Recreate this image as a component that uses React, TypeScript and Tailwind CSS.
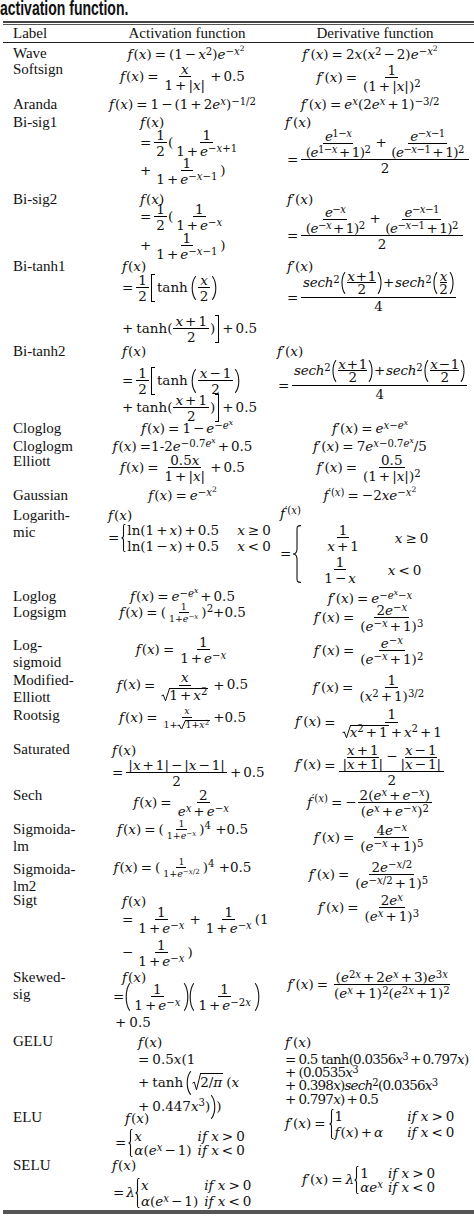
import React, { type ReactNode } from "react";

const x = <i>x</i>;
const e = <i>e</i>;
const fx = (
  <>
    <i className="mr-[1px]">f</i>(<i>x</i>)
  </>
);
const fpx = (
  <>
    <i>f</i>′(<i>x</i>)
  </>
);
const fpxs = (
  <>
    <i>f</i>
    <sup>
      ′(<i>x</i>)
    </sup>
  </>
);
const EQ = <span className="mx-[3px]">=</span>;
const P = <span className="mx-[2px]">+</span>;
const P1 = <span className="mx-[1px]">+</span>;
const Mi = <span className="mx-[2px]">−</span>;
const M1 = <span className="mx-[1px]">−</span>;
const GE = <span className="mx-[3px]">≥</span>;
const LT = <span className="mx-[3px]">&lt;</span>;
const GT = <span className="mx-[3px]">&gt;</span>;
const sech2 = (
  <>
    <i>sech</i>
    <sup>2</sup>
  </>
);

function Ln({ c, children }: { c: string; children: ReactNode }) {
  return (
    <div className={"flex h-0 items-center " + c}>
      <span className="whitespace-nowrap leading-[1.2]">{children}</span>
    </div>
  );
}

function Frac({
  n,
  d,
  s,
  t,
  dc = "",
}: {
  n: ReactNode;
  d: ReactNode;
  s?: boolean;
  t?: boolean;
  dc?: string;
}) {
  const nc = t ? "leading-[0.85] px-0" : "leading-[0.9] pb-[1px] px-[2px]";
  const dd = t ? "leading-[0.85] pt-[1px] px-0" : "leading-[0.9] pt-[2px] px-[2px]";
  return (
    <span
      className={
        "inline-flex flex-col items-center align-middle " +
        (s ? "text-[0.7em] mx-[1px]" : "mx-[1px]")
      }
    >
      <span className={"border-b border-black whitespace-nowrap " + nc}>{n}</span>
      <span className={"whitespace-nowrap " + dd + " " + dc}>{d}</span>
    </span>
  );
}

function Brace({ c }: { c: string }) {
  return (
    <svg viewBox="0 0 10 100" preserveAspectRatio="none" className={"inline-block shrink-0 " + c}>
      <path
        d="M9 1 C5 1 5 3 5 9 L5 41 C5 47 4 50 1 50 C4 50 5 53 5 59 L5 91 C5 97 5 99 9 99"
        fill="none"
        stroke="#111"
        strokeWidth="1.1"
        vectorEffect="non-scaling-stroke"
      />
    </svg>
  );
}

function BP({ r, c }: { r?: boolean; c: string }) {
  return (
    <svg viewBox="0 0 10 100" preserveAspectRatio="none" className={"inline-block align-middle " + c}>
      <path
        d={r ? "M2 1 C10 25 10 75 2 99" : "M8 1 C0 25 0 75 8 99"}
        fill="none"
        stroke="#111"
        strokeWidth="1.1"
        vectorEffect="non-scaling-stroke"
      />
    </svg>
  );
}

function Br({ r, c }: { r?: boolean; c: string }) {
  return (
    <span
      className={
        "inline-block align-middle w-[4px] border-y border-black " +
        (r ? "border-r mr-[1px] " : "border-l ml-[1px] ") +
        c
      }
    />
  );
}

function Sq({ children }: { children: ReactNode }) {
  return (
    <span className="relative inline-block pl-[8px]">
      <svg viewBox="0 0 10 20" preserveAspectRatio="none" className="absolute left-0 top-0 h-full w-[9px]">
        <path
          d="M0.5 12 L2.5 10.5 L5 19.5 L9.5 0.5 L10 0.5"
          fill="none"
          stroke="#111"
          strokeWidth="1"
          vectorEffect="non-scaling-stroke"
        />
      </svg>
      <span className="inline-block border-t border-black pr-[1px]">{children}</span>
    </span>
  );
}

function Row({ h, label, a, d }: { h: string; label: ReactNode; a: ReactNode; d: ReactNode }) {
  return (
    <div className={"grid grid-cols-[102px_155px_1fr] " + h}>
      <div className="pl-[10px] font-['Liberation_Serif',serif] text-[15px] leading-[17px]">{label}</div>
      <div className="flex flex-col">{a}</div>
      <div className="flex flex-col pl-[6px]">{d}</div>
    </div>
  );
}

const denE = (sup: ReactNode) => (
  <>
    1{P}
    {e}
    <sup>{sup}</sup>
  </>
);

function Cases2({
  brace,
  grid,
  cells,
}: {
  brace: string;
  grid: string;
  cells: ReactNode[];
}) {
  return (
    <span className="inline-flex items-center align-middle">
      <Brace c={brace} />
      <span className={"ml-[1px] inline-grid grid-cols-[auto_auto] " + grid}>
        {cells.map((c, k) => (
          <span key={k}>{c}</span>
        ))}
      </span>
    </span>
  );
}

const ifGt = (
  <>
    <i>if</i> {x}
    {GT}0
  </>
);
const ifLt = (
  <>
    <i>if</i> {x}
    {LT}0
  </>
);
const alphaE = (
  <>
    <i>α</i>({e}
    <sup>{x}</sup>
    {Mi}1)
  </>
);

export default function App() {
  return (
    <div className="w-[474px] h-[1217px] overflow-hidden bg-white text-[#111]">
      <div className="h-[23px]">
        <div className="-mt-[2px] origin-left scale-x-[0.7] whitespace-nowrap font-['Liberation_Sans',sans-serif] text-[20px] font-bold leading-[20px]">
          activation function.
        </div>
      </div>
      <div className="pl-[3px] font-['DejaVu_Serif',serif] text-[13.5px] [&_sup]:top-[-0.42em]">
        <div className="h-[2px] bg-[#444]" />
        <div className="h-[1px]" />
        <div className="h-[1px] bg-[#555]" />
        <div className="grid grid-cols-[102px_155px_1fr] h-[17px] font-['Liberation_Serif',serif] text-[15px] leading-[17px]">
          <div className="pl-[10px]">Label</div>
          <div className="pl-[9px] text-center">Activation function</div>
          <div className="pl-[16px] text-center">Derivative function</div>
        </div>
        <div className="h-[1px] bg-[#222]" />
        <div className="h-[1.5px]" />

        <Row
          h="h-[16px]"
          label="Wave"
          a={
            <Ln c="mt-[9.5px] justify-center pl-[7px]">
              {fx}
              {EQ}(1{Mi}
              {x}
              <sup>2</sup>){e}
              <sup>
                −{x}
                <sup>2</sup>
              </sup>
            </Ln>
          }
          d={
            <Ln c="mt-[9.5px] justify-center">
              {fpx}
              {EQ}2{x}({x}
              <sup>2</sup>
              {Mi}2){e}
              <sup>
                −{x}
                <sup>2</sup>
              </sup>
            </Ln>
          }
        />
        <Row
          h="h-[35px]"
          label="Softsign"
          a={
            <Ln c="mt-[16.5px] justify-center">
              {fx}
              {EQ}
              <Frac n={x} d={<>1{P}|{x}|</>} />
              {P}0.5
            </Ln>
          }
          d={
            <Ln c="mt-[17.5px] justify-center">
              {fpx}
              {EQ}
              <Frac
                n="1"
                d={
                  <>
                    (1{P}|{x}|)<sup>2</sup>
                  </>
                }
              />
            </Ln>
          }
        />
        <Row
          h="h-[18px]"
          label="Aranda"
          a={
            <Ln c="mt-[8.5px] justify-center">
              {fx}
              {EQ}1{Mi}(1{P}2{e}
              <sup>{x}</sup>)<sup>−1/2</sup>
            </Ln>
          }
          d={
            <Ln c="mt-[8.5px] justify-center">
              {fpx}
              {EQ}
              {e}
              <sup>{x}</sup>(2{e}
              <sup>{x}</sup>
              {P}1)<sup>−3/2</sup>
            </Ln>
          }
        />
        <Row
          h="h-[77px]"
          label="Bi-sig1"
          a={
            <>
              <Ln c="mt-[8.5px] pl-[35px]">{fx}</Ln>
              <Ln c="mt-[21px] pl-[35px]">
                <span className="mr-[2px]">=</span>
                <Frac n="1" d="2" />(
                <Frac n="1" d={denE(<>−{x}+1</>)} />
              </Ln>
              <Ln c="mt-[28px] pl-[35px]">
                <span className="mr-[2px]">+</span>
                <Frac n="1" d={denE(<>−{x}−1</>)} />)
              </Ln>
            </>
          }
          d={
            <>
              <Ln c="mt-[8.5px] pl-[19px]">{fpx}</Ln>
              <Ln c="mt-[38px] pl-[21px] tracking-[-0.04em]">
                <span className="mr-[2px]">=</span>
                <Frac
                  dc="pb-[16px]"
                  n={
                    <>
                      <Frac
                        n={
                          <>
                            {e}
                            <sup>1−{x}</sup>
                          </>
                        }
                        d={
                          <>
                            ({e}
                            <sup>1−{x}</sup>
                            {P}1)<sup>2</sup>
                          </>
                        }
                      />
                      {P}
                      <Frac
                        n={
                          <>
                            {e}
                            <sup>−{x}−1</sup>
                          </>
                        }
                        d={
                          <>
                            ({e}
                            <sup>−{x}−1</sup>
                            {P}1)<sup>2</sup>
                          </>
                        }
                      />
                    </>
                  }
                  d="2"
                />
              </Ln>
            </>
          }
        />
        <Row
          h="h-[67px]"
          label="Bi-sig2"
          a={
            <>
              <Ln c="mt-[8.5px] pl-[35px]">{fx}</Ln>
              <Ln c="mt-[18px] pl-[35px]">
                <span className="mr-[2px]">=</span>
                <Frac n="1" d="2" />(
                <Frac n="1" d={denE(<>−{x}</>)} />
              </Ln>
              <Ln c="mt-[29px] pl-[35px]">
                <span className="mr-[2px]">+</span>
                <Frac n="1" d={denE(<>−{x}−1</>)} />)
              </Ln>
            </>
          }
          d={
            <>
              <Ln c="mt-[8.5px] pl-[21px]">{fpx}</Ln>
              <Ln c="mt-[37px] pl-[21px] tracking-[-0.04em]">
                <span className="mr-[2px]">=</span>
                <Frac
                  dc="pb-[16px]"
                  n={
                    <>
                      <Frac
                        n={
                          <>
                            {e}
                            <sup>−{x}</sup>
                          </>
                        }
                        d={
                          <>
                            ({e}
                            <sup>−{x}</sup>
                            {P}1)<sup>2</sup>
                          </>
                        }
                      />
                      {P}
                      <Frac
                        n={
                          <>
                            {e}
                            <sup>−{x}−1</sup>
                          </>
                        }
                        d={
                          <>
                            ({e}
                            <sup>−{x}−1</sup>
                            {P}1)<sup>2</sup>
                          </>
                        }
                      />
                    </>
                  }
                  d="2"
                />
              </Ln>
            </>
          }
        />
        <Row
          h="h-[85px]"
          label="Bi-tanh1"
          a={
            <>
              <Ln c="mt-[8.5px] pl-[17px]">{fx}</Ln>
              <Ln c="mt-[22px] pl-[17px]">
                <span className="mr-[2px]">=</span>
                <Frac n="1" d="2" />
                <Br c="h-[28px]" />
                <span className="ml-[2px] mr-[3px]">tanh</span>
                <BP c="w-[6px] h-[24px]" />
                <Frac n={x} d="2" />
                <BP r c="w-[6px] h-[24px]" />
              </Ln>
              <Ln c="mt-[41px] pl-[17px]">
                <span className="mr-[3px]">+</span>tanh(
                <Frac n={<>{x}{P}1</>} d="2" />)
                <Br r c="h-[28px]" />
                {P}0.5
              </Ln>
            </>
          }
          d={
            <>
              <Ln c="mt-[8.5px] pl-[21px]">{fpx}</Ln>
              <Ln c="mt-[32px] pl-[21px] tracking-[-0.02em]">
                <span className="mr-[2px]">=</span>
                <Frac
                  dc="pb-[13px]"
                  n={
                    <>
                      {sech2}
                      <BP c="ml-[2px] w-[5px] h-[22px]" />
                      <Frac t n={<>{x}{P1}1</>} d="2" />
                      <BP r c="w-[5px] h-[22px]" />
                      {P1}
                      {sech2}
                      <BP c="ml-[2px] w-[5px] h-[22px]" />
                      <Frac t n={x} d="2" />
                      <BP r c="w-[5px] h-[22px]" />
                    </>
                  }
                  d="4"
                />
              </Ln>
            </>
          }
        />
        <Row
          h="h-[77px]"
          label="Bi-tanh2"
          a={
            <>
              <Ln c="mt-[8.5px] pl-[17px]">{fx}</Ln>
              <Ln c="mt-[30px] pl-[17px]">
                <span className="mr-[2px]">=</span>
                <Frac n="1" d="2" />
                <Br c="h-[28px]" />
                <span className="ml-[2px] mr-[3px]">tanh</span>
                <BP c="w-[6px] h-[24px]" />
                <Frac n={<>{x}{Mi}1</>} d="2" />
                <BP r c="w-[6px] h-[24px]" />
              </Ln>
              <Ln c="mt-[27px] pl-[17px]">
                <span className="mr-[3px]">+</span>tanh(
                <Frac n={<>{x}{P}1</>} d="2" />)
                <Br r c="h-[28px]" />
                {P}0.5
              </Ln>
            </>
          }
          d={
            <>
              <Ln c="mt-[8.5px] pl-[11px]">{fpx}</Ln>
              <Ln c="mt-[35px] pl-[12px] tracking-[-0.02em]">
                <span className="mr-[2px]">=</span>
                <Frac
                  dc="pb-[13px]"
                  n={
                    <>
                      {sech2}
                      <BP c="ml-[2px] w-[5px] h-[22px]" />
                      <Frac t n={<>{x}{P1}1</>} d="2" />
                      <BP r c="w-[5px] h-[22px]" />
                      {P1}
                      {sech2}
                      <BP c="ml-[2px] w-[5px] h-[22px]" />
                      <Frac t n={<>{x}{M1}1</>} d="2" />
                      <BP r c="w-[5px] h-[22px]" />
                    </>
                  }
                  d="4"
                />
              </Ln>
            </>
          }
        />
        <Row
          h="h-[18px]"
          label="Cloglog"
          a={
            <Ln c="mt-[8.5px] justify-center pl-[9px]">
              {fx}
              {EQ}1{Mi}
              {e}
              <sup>
                −{e}
                <sup>{x}</sup>
              </sup>
            </Ln>
          }
          d={
            <Ln c="mt-[8.5px] justify-center">
              {fpx}
              {EQ}
              {e}
              <sup>
                {x}−{e}
                <sup>{x}</sup>
              </sup>
            </Ln>
          }
        />
        <Row
          h="h-[15px]"
          label="Cloglogm"
          a={
            <Ln c="mt-[8.5px] justify-center">
              {fx}
              <span className="ml-[3px]">=1-2</span>
              {e}
              <sup>
                −0.7{e}
                <sup>{x}</sup>
              </sup>
              {P}0.5
            </Ln>
          }
          d={
            <Ln c="mt-[8.5px] justify-center">
              {fpx}
              {EQ}7{e}
              <sup>
                {x}−0.7{e}
                <sup>{x}</sup>
              </sup>
              /5
            </Ln>
          }
        />
        <Row
          h="h-[34px]"
          label="Elliott"
          a={
            <Ln c="mt-[15.5px] justify-center">
              {fx}
              {EQ}
              <Frac n={<>0.5{x}</>} d={<>1{P}|{x}|</>} />
              {P}0.5
            </Ln>
          }
          d={
            <Ln c="mt-[15.5px] justify-center">
              {fpx}
              {EQ}
              <Frac
                n="0.5"
                d={
                  <>
                    (1{P}|{x}|)<sup>2</sup>
                  </>
                }
              />
            </Ln>
          }
        />
        <Row
          h="h-[20px]"
          label="Gaussian"
          a={
            <Ln c="mt-[8.5px] justify-center">
              {fx}
              {EQ}
              {e}
              <sup>
                −{x}
                <sup>2</sup>
              </sup>
            </Ln>
          }
          d={
            <Ln c="mt-[8.5px] justify-center">
              {fpxs}
              {EQ}−2{x}
              {e}
              <sup>
                −{x}
                <sup>2</sup>
              </sup>
            </Ln>
          }
        />
        <Row
          h="h-[81px]"
          label={
            <>
              Logarith-
              <br />
              mic
            </>
          }
          a={
            <>
              <Ln c="mt-[8.5px] pl-[3px]">{fx}</Ln>
              <Ln c="mt-[23px] pl-[3px]">
                <span className="mr-[2px]">=</span>
                <Cases2
                  brace="w-[5px] h-[28px]"
                  grid="gap-x-[18px] leading-[16px]"
                  cells={[
                    <>
                      ln(1{P}
                      {x}){P}0.5
                    </>,
                    <>
                      {x}
                      {GE}0
                    </>,
                    <>
                      ln(1{Mi}
                      {x}){P}0.5
                    </>,
                    <>
                      {x}
                      {LT}0
                    </>,
                  ]}
                />
              </Ln>
            </>
          }
          d={
            <>
              <Ln c="mt-[6.5px] pl-[14px]">{fpxs}</Ln>
              <Ln c="mt-[41px] pl-[14px]">
                <span className="mr-[1px]">=</span>
                <span className="inline-flex items-center align-middle">
                  <Brace c="w-[10px] h-[58px]" />
                  <span className="inline-flex flex-col gap-[3px]">
                    <span className="flex items-center">
                      <span className="ml-[22px]">
                        <Frac n="1" d={<>{x}{P}1</>} />
                      </span>
                      <span className="ml-[33px]">
                        {x}
                        {GE}0
                      </span>
                    </span>
                    <span className="flex items-center">
                      <span className="ml-[19px]">
                        <Frac n="1" d={<>1{Mi}{x}</>} />
                      </span>
                      <span className="ml-[29px]">
                        {x}
                        {LT}0
                      </span>
                    </span>
                  </span>
                </span>
              </Ln>
            </>
          }
        />
        <Row
          h="h-[16px]"
          label="Loglog"
          a={
            <Ln c="mt-[8.5px] justify-center">
              {fx}
              {EQ}
              {e}
              <sup>
                −{e}
                <sup>{x}</sup>
              </sup>
              {P}0.5
            </Ln>
          }
          d={
            <Ln c="mt-[10.5px] justify-center">
              {fpx}
              {EQ}
              {e}
              <sup>
                −{e}
                <sup>{x}</sup>−{x}
              </sup>
            </Ln>
          }
        />
        <Row
          h="h-[33px]"
          label="Logsigm"
          a={
            <Ln c="mt-[9.5px] justify-center">
              {fx}
              {EQ}(
              <Frac
                s
                n="1"
                d={
                  <>
                    1+{e}
                    <sup>−{x}</sup>
                  </>
                }
              />
              )<sup>2</sup>+0.5
            </Ln>
          }
          d={
            <Ln c="mt-[14.5px] justify-center">
              {fpx}
              {EQ}
              <Frac
                n={
                  <>
                    2{e}
                    <sup>−{x}</sup>
                  </>
                }
                d={
                  <>
                    ({e}
                    <sup>−{x}</sup>
                    {P}1)<sup>3</sup>
                  </>
                }
              />
            </Ln>
          }
        />
        <Row
          h="h-[35px]"
          label={
            <>
              Log-
              <br />
              sigmoid
            </>
          }
          a={
            <Ln c="mt-[13.5px] justify-center">
              {fx}
              {EQ}
              <Frac n="1" d={denE(<>−{x}</>)} />
            </Ln>
          }
          d={
            <Ln c="mt-[14.5px] justify-center">
              {fpx}
              {EQ}
              <Frac
                n={
                  <>
                    {e}
                    <sup>−{x}</sup>
                  </>
                }
                d={
                  <>
                    ({e}
                    <sup>−{x}</sup>
                    {P}1)<sup>2</sup>
                  </>
                }
              />
            </Ln>
          }
        />
        <Row
          h="h-[35px]"
          label={
            <>
              Modified-
              <br />
              Elliott
            </>
          }
          a={
            <Ln c="mt-[14.5px] justify-center">
              {fx}
              {EQ}
              <Frac
                n={x}
                d={
                  <Sq>
                    1{P}
                    {x}
                    <sup>2</sup>
                  </Sq>
                }
              />
              {P}0.5
            </Ln>
          }
          d={
            <Ln c="mt-[16.5px] justify-center">
              {fpx}
              {EQ}
              <Frac
                n="1"
                d={
                  <>
                    ({x}
                    <sup>2</sup>
                    {P}1)<sup>3/2</sup>
                  </>
                }
              />
            </Ln>
          }
        />
        <Row
          h="h-[34px]"
          label="Rootsig"
          a={
            <Ln c="mt-[11.5px] justify-center">
              {fx}
              {EQ}
              <Frac
                s
                n={x}
                d={
                  <>
                    1+
                    <Sq>
                      1+{x}
                      <sup>2</sup>
                    </Sq>
                  </>
                }
              />
              +0.5
            </Ln>
          }
          d={
            <Ln c="mt-[16.5px] justify-center">
              {fpx}
              {EQ}
              <Frac
                n="1"
                d={
                  <>
                    <Sq>
                      {x}
                      <sup>2</sup>
                      {P}1
                    </Sq>
                    {P}
                    {x}
                    <sup>2</sup>
                    {P}1
                  </>
                }
              />
            </Ln>
          }
        />
        <Row
          h="h-[46px]"
          label="Saturated"
          a={
            <>
              <Ln c="mt-[9.5px] pl-[7px]">{fx}</Ln>
              <Ln c="mt-[23px] pl-[7px]">
                <span className="mr-[2px]">=</span>
                <Frac
                  n={
                    <>
                      |{x}
                      {P}1|{Mi}|{x}
                      {Mi}1|
                    </>
                  }
                  d="2"
                />
                {P}0.5
              </Ln>
            </>
          }
          d={
            <Ln c="mt-[25.5px] justify-center">
              {fpx}
              {EQ}
              <Frac
                n={
                  <>
                    <Frac t n={<>{x}{P}1</>} d={<>|{x}{P}1|</>} />
                    {Mi}
                    <Frac t n={<>{x}{Mi}1</>} d={<>|{x}{Mi}1|</>} />
                  </>
                }
                d="2"
              />
            </Ln>
          }
        />
        <Row
          h="h-[34px]"
          label="Sech"
          a={
            <Ln c="mt-[16.5px] justify-center">
              {fx}
              {EQ}
              <Frac
                n="2"
                d={
                  <>
                    {e}
                    <sup>{x}</sup>
                    {P}
                    {e}
                    <sup>−{x}</sup>
                  </>
                }
              />
            </Ln>
          }
          d={
            <Ln c="mt-[16.5px] justify-center">
              {fpxs}
              {EQ}−
              <Frac
                n={
                  <>
                    2({e}
                    <sup>{x}</sup>
                    {P}
                    {e}
                    <sup>−{x}</sup>)
                  </>
                }
                d={
                  <>
                    ({e}
                    <sup>{x}</sup>
                    {P}
                    {e}
                    <sup>−{x}</sup>)<sup>2</sup>
                  </>
                }
              />
            </Ln>
          }
        />
        <Row
          h="h-[40px]"
          label={
            <>
              Sigmoida-
              <br />
              lm
            </>
          }
          a={
            <Ln c="mt-[9.5px] justify-center">
              {fx}
              {EQ}(
              <Frac
                s
                n="1"
                d={
                  <>
                    1+{e}
                    <sup>−{x}</sup>
                  </>
                }
              />
              )<sup>4</sup> +0.5
            </Ln>
          }
          d={
            <Ln c="mt-[17.5px] justify-center">
              {fpx}
              {EQ}
              <Frac
                n={
                  <>
                    4{e}
                    <sup>−{x}</sup>
                  </>
                }
                d={
                  <>
                    ({e}
                    <sup>−{x}</sup>
                    {P}1)<sup>5</sup>
                  </>
                }
              />
            </Ln>
          }
        />
        <Row
          h="h-[31px]"
          label={
            <>
              Sigmoida-
              <br />
              lm2
            </>
          }
          a={
            <Ln c="mt-[7.5px] justify-center">
              {fx}
              {EQ}(
              <Frac
                s
                n="1"
                d={
                  <>
                    1+{e}
                    <sup>−{x}/2</sup>
                  </>
                }
              />
              )<sup>4</sup> +0.5
            </Ln>
          }
          d={
            <Ln c="mt-[14.5px] justify-center">
              {fpx}
              {EQ}
              <Frac
                n={
                  <>
                    2{e}
                    <sup>−{x}/2</sup>
                  </>
                }
                d={
                  <>
                    ({e}
                    <sup>−{x}/2</sup>
                    {P}1)<sup>5</sup>
                  </>
                }
              />
            </Ln>
          }
        />
        <Row
          h="h-[77px]"
          label="Sigt"
          a={
            <>
              <Ln c="mt-[9.5px] pl-[17px]">{fx}</Ln>
              <Ln c="mt-[19px] pl-[17px]">
                <span className="mr-[2px]">=</span>
                <Frac n="1" d={denE(<>−{x}</>)} />
                {P}
                <Frac n="1" d={denE(<>−{x}</>)} />
                (1
              </Ln>
              <Ln c="mt-[33px] pl-[17px]">
                <span className="mr-[2px]">−</span>
                <Frac n="1" d={denE(<>−{x}</>)} />)
              </Ln>
            </>
          }
          d={
            <Ln c="mt-[16.5px] justify-center">
              {fpx}
              {EQ}
              <Frac
                n={
                  <>
                    2{e}
                    <sup>{x}</sup>
                  </>
                }
                d={
                  <>
                    ({e}
                    <sup>{x}</sup>
                    {P}1)<sup>3</sup>
                  </>
                }
              />
            </Ln>
          }
        />
        <Row
          h="h-[64px]"
          label={
            <>
              Skewed-
              <br />
              sig
            </>
          }
          a={
            <>
              <Ln c="mt-[8.5px] pl-[17px]">{fx}</Ln>
              <Ln c="mt-[20px] pl-[8px]">
                <span className="mr-[1px]">=</span>
                <BP c="w-[6px] h-[28px]" />
                <Frac n="1" d={denE(<>−{x}</>)} />
                <BP r c="w-[6px] h-[28px]" />
                <BP c="w-[6px] h-[28px]" />
                <Frac n="1" d={denE(<>−2{x}</>)} />
                <BP r c="w-[6px] h-[28px]" />
              </Ln>
              <Ln c="mt-[25px] pl-[10px]">
                <span className="mr-[3px]">+</span>0.5
              </Ln>
            </>
          }
          d={
            <Ln c="mt-[16.5px] justify-center">
              {fpx}
              {EQ}
              <Frac
                n={
                  <>
                    ({e}
                    <sup>2{x}</sup>
                    {P}2{e}
                    <sup>{x}</sup>
                    {P}3){e}
                    <sup>3{x}</sup>
                  </>
                }
                d={
                  <>
                    ({e}
                    <sup>{x}</sup>
                    {P}1)<sup>2</sup>({e}
                    <sup>2{x}</sup>
                    {P}1)<sup>2</sup>
                  </>
                }
              />
            </Ln>
          }
        />
        <Row
          h="h-[76px]"
          label="GELU"
          a={
            <>
              <Ln c="mt-[9.5px] pl-[33px]">{fx}</Ln>
              <Ln c="mt-[17px] pl-[33px]">
                <span className="mr-[3px]">=</span>0.5{x}(1
              </Ln>
              <Ln c="mt-[24px] pl-[33px]">
                <span className="mr-[3px]">+</span>tanh
                <BP c="ml-[3px] w-[6px] h-[24px]" />
                <Sq>
                  2/<i>π</i>
                </Sq>
                <span className="ml-[3px]">(</span>
                {x}
              </Ln>
              <Ln c="mt-[24px] pl-[33px]">
                <span className="mr-[3px]">+</span>0.447{x}
                <sup>3</sup>)
                <BP r c="w-[6px] h-[24px]" />)
              </Ln>
            </>
          }
          d={
            <>
              <Ln c="mt-[9.5px] pl-[19px]">{fpx}</Ln>
              <Ln c="mt-[17px] pl-[19px] tracking-[-0.06em]">
                <span className="mr-[3px]">=</span>0.5 tanh(0.0356{x}
                <sup>3</sup>
                {P}0.797{x})
              </Ln>
              <Ln c="mt-[13px] pl-[19px] tracking-[-0.06em]">
                <span className="mr-[3px]">+</span>(0.0535{x}
                <sup>3</sup>
              </Ln>
              <Ln c="mt-[13px] pl-[19px] tracking-[-0.06em]">
                <span className="mr-[3px]">+</span>0.398{x}){sech2}(0.0356{x}
                <sup>3</sup>
              </Ln>
              <Ln c="mt-[14px] pl-[19px] tracking-[-0.06em]">
                <span className="mr-[3px]">+</span>0.797{x}){P}0.5
              </Ln>
            </>
          }
        />
        <Row
          h="h-[48px]"
          label="ELU"
          a={
            <>
              <Ln c="mt-[9.5px] pl-[20px]">{fx}</Ln>
              <Ln c="mt-[25px] pl-[10px]">
                <span className="mr-[2px]">=</span>
                <Cases2
                  brace="w-[5px] h-[28px]"
                  grid="gap-x-[6px] leading-[14px]"
                  cells={[x, ifGt, alphaE, ifLt]}
                />
              </Ln>
            </>
          }
          d={
            <Ln c="mt-[15.5px] pl-[19px]">
              {fpx}
              {EQ}
              <Cases2
                brace="w-[5px] h-[30px]"
                grid="gap-x-[24px] leading-[16px]"
                cells={[
                  "1",
                  ifGt,
                  <>
                    {fx}
                    {P}
                    <i>α</i>
                  </>,
                  ifLt,
                ]}
              />
            </Ln>
          }
        />
        <Row
          h="h-[53.5px]"
          label="SELU"
          a={
            <>
              <Ln c="mt-[8.5px] pl-[7px]">{fx}</Ln>
              <Ln c="mt-[28px] pl-[8px]">
                <span className="mr-[2px]">=</span>
                <i>λ</i>
                <Cases2
                  brace="w-[5px] h-[30px]"
                  grid="gap-x-[6px] leading-[16px]"
                  cells={[x, ifGt, alphaE, ifLt]}
                />
              </Ln>
            </>
          }
          d={
            <Ln c="mt-[23.5px] pl-[36px]">
              {fpx}
              {EQ}
              <i>λ</i>
              <Cases2
                brace="w-[5px] h-[28px]"
                grid="gap-x-[5px] leading-[14px]"
                cells={[
                  "1",
                  ifGt,
                  <>
                    <i>α</i>
                    {e}
                    <sup>{x}</sup>
                  </>,
                  ifLt,
                ]}
              />
            </Ln>
          }
        />
        <div className="h-[4px] bg-[#555]" />
      </div>
    </div>
  );
}
